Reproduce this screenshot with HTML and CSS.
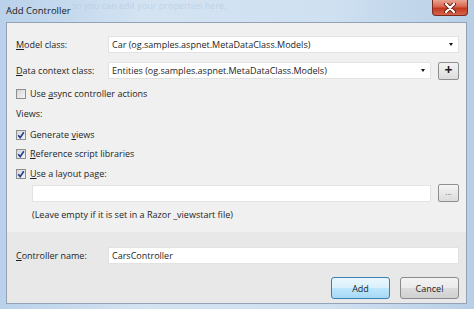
FILE: index.html
```html
<!DOCTYPE html>
<html lang="en">
<head>
  <meta charset="UTF-8">
  <title>Add Controller</title>
  <link rel="stylesheet" href="styles.css">
</head>
<body>

  <div class="window">
    <div class="titlebar">
      <span class="ghost">so you can edit your properties here.</span>
      <span class="title">Add Controller</span>
      <div class="close">
        <svg width="14" height="10" viewBox="0 0 14 10">
          <path d="M3 1 L11 9 M11 1 L3 9" stroke="#6b1d12" stroke-width="4" stroke-linecap="round"/>
          <path d="M3 1 L11 9 M11 1 L3 9" stroke="#ffffff" stroke-width="2.2" stroke-linecap="round"/>
        </svg>
      </div>
    </div>

    <div class="client">
      <div class="main">
        <div class="row row-model">
          <label class="lbl"><u>M</u>odel class:</label>
          <div class="combo">
            <span>Car (og.samples.aspnet.MetaDataClass.Models)</span>
            <span class="arrow"></span>
          </div>
        </div>

        <div class="row row-data">
          <label class="lbl"><u>D</u>ata context class:</label>
          <div class="combo">
            <span>Entities (og.samples.aspnet.MetaDataClass.Models)</span>
            <span class="arrow"></span>
          </div>
          <div class="small-btn plus">+</div>
        </div>

        <div class="check check-async">
          <span class="box"></span>
          <span>Use <u>a</u>sync controller actions</span>
        </div>

        <div class="views-lbl">Views:</div>

        <div class="check check-gen">
          <span class="box checked"><svg width="8" height="8" viewBox="0 0 8 8"><path d="M1.2 4.2 L3.2 6.6 L6.8 1.2" fill="none" stroke="#1f3f8f" stroke-width="1.6"/></svg></span>
          <span>Generate <u>v</u>iews</span>
        </div>

        <div class="check check-ref">
          <span class="box checked"><svg width="8" height="8" viewBox="0 0 8 8"><path d="M1.2 4.2 L3.2 6.6 L6.8 1.2" fill="none" stroke="#1f3f8f" stroke-width="1.6"/></svg></span>
          <span><u>R</u>eference script libraries</span>
        </div>

        <div class="check check-layout">
          <span class="box checked"><svg width="8" height="8" viewBox="0 0 8 8"><path d="M1.2 4.2 L3.2 6.6 L6.8 1.2" fill="none" stroke="#1f3f8f" stroke-width="1.6"/></svg></span>
          <span><u>U</u>se a layout page:</span>
        </div>

        <div class="layout-row">
          <div class="textbox"></div>
          <div class="small-btn dots">...</div>
        </div>

        <div class="hint">(Leave empty if it is set in a Razor _viewstart file)</div>
      </div>

      <div class="footer">
        <div class="row row-name">
          <label class="lbl"><u>C</u>ontroller name:</label>
          <div class="textbox">CarsController</div>
        </div>
        <div class="actions">
          <div class="btn btn-default">Add</div>
          <div class="btn">Cancel</div>
        </div>
      </div>
    </div>
  </div>

</body>
</html>
```

FILE: styles.css
```css
body {
  margin: 0;
  font-family: "Open Sans", "Noto Sans", sans-serif;
  font-size: 9px;
  color: #1e1e1e;
}

.window {
  position: relative;
  width: 474px;
  height: 309px;
  background: linear-gradient(90deg, #b9d1ea 0%, #d3e3f2 30%, #cfe0f1 70%, #b7cfe6 100%);
  overflow: hidden;
}

.titlebar {
  position: relative;
  height: 22px;
  display: flex;
  align-items: center;
}

.title {
  margin-left: 6px;
  margin-top: -2px;
  font-size: 9.5px;
  color: #1a1a1a;
}

.ghost {
  position: absolute;
  left: 72px;
  top: 0;
  font-size: 9px;
  line-height: 11px;
  color: rgba(120, 160, 190, 0.25);
}

.close {
  position: absolute;
  right: 6px;
  top: 0;
  width: 36px;
  height: 16px;
  border: 1px solid #7a2a1e;
  border-top: none;
  border-radius: 0 0 4px 4px;
  background: linear-gradient(#e9a493 0%, #d9644c 45%, #c2381f 55%, #d5664a 100%);
  display: flex;
  align-items: center;
  justify-content: center;
  box-sizing: border-box;
}

.client {
  margin: 0 7px 0 6px;
  height: 282px;
  border: 1px solid #93a3b5;
  box-sizing: border-box;
  display: flex;
  flex-direction: column;
}

.main {
  height: 209px;
  background: #f0f0f0;
  padding: 0 7px 0 9px;
}

.footer {
  flex: 1;
  background: #e8e8e8;
  padding: 0 7px 0 9px;
}

.row {
  display: flex;
  align-items: center;
  height: 17px;
}

.row-model { margin-top: 13px; }
.row-data { margin-top: 9px; }
.row-name { margin-top: 15px; }

.lbl {
  width: 92px;
  flex: none;
}

.combo, .textbox {
  flex: 1;
  height: 17px;
  background: #ffffff;
  border: 1px solid #e2e2e2;
  box-sizing: border-box;
  display: flex;
  align-items: center;
  padding-left: 3px;
}

.combo span:first-child {
  flex: 1;
}

.arrow {
  width: 0;
  height: 0;
  margin-right: 5px;
  border-left: 2.5px solid transparent;
  border-right: 2.5px solid transparent;
  border-top: 3px solid #111;
}

.small-btn {
  width: 21px;
  height: 18px;
  margin-left: 7px;
  box-sizing: border-box;
  border: 1px solid #8e8f8f;
  border-radius: 2px;
  background: linear-gradient(#f4f4f4, #dcdcdc);
  display: flex;
  align-items: center;
  justify-content: center;
}

.plus {
  font-size: 14px;
  font-weight: bold;
  line-height: 1;
  padding-bottom: 2px;
}

.dots {
  font-size: 8px;
  color: #666;
  padding-bottom: 3px;
}

.check {
  display: flex;
  align-items: center;
  height: 13px;
}

.check-async { margin-top: 8px; }
.check-gen { margin-top: 8px; }
.check-ref { margin-top: 6px; }
.check-layout { margin-top: 7px; }

.box {
  width: 10px;
  height: 10px;
  margin-right: 4px;
  box-sizing: border-box;
  border: 1px solid #8f8f8f;
  background: linear-gradient(135deg, #d6d6d6, #f4f4f4);
  display: flex;
  align-items: center;
  justify-content: center;
}

.views-lbl {
  margin-top: 7px;
  height: 13px;
  line-height: 13px;
}

.layout-row {
  display: flex;
  align-items: center;
  margin-top: 4px;
  padding-left: 16px;
}

.hint {
  margin-top: 6px;
  padding-left: 16px;
  height: 13px;
  line-height: 13px;
}

.actions {
  display: flex;
  justify-content: flex-end;
  gap: 10px;
  margin-top: 13px;
}

.btn {
  width: 59px;
  height: 22px;
  box-sizing: border-box;
  border: 1px solid #8a8a8a;
  border-radius: 3px;
  background: linear-gradient(#f3f3f3 0%, #ebebeb 50%, #dcdcdc 51%, #d0d0d0 100%);
  display: flex;
  align-items: center;
  justify-content: center;
}

.btn-default {
  border-color: #3c7fb1;
  background: linear-gradient(#eaf6fd 0%, #d9f0fc 50%, #bee6fd 51%, #a7d9f5 100%);
}
```
